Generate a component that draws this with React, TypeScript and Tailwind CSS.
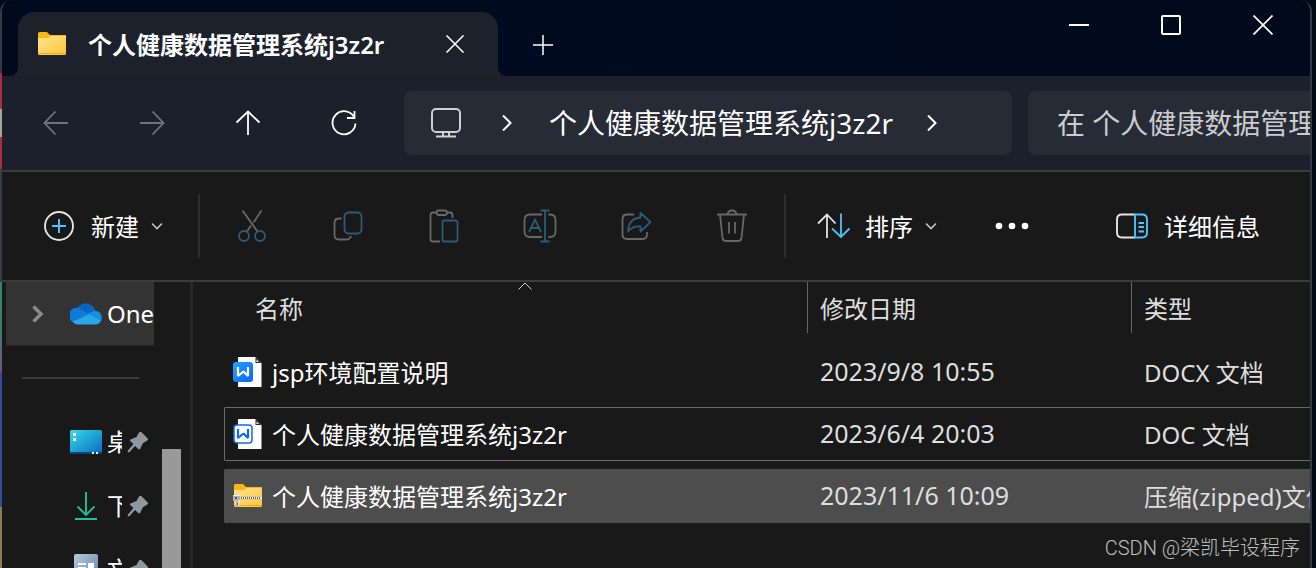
import type { ReactNode } from "react";
import clsx from "clsx";

type IconProps = { className?: string };

function FolderIcon({ zipped = false }: { zipped?: boolean }) {
  const id = zipped ? "zip-front" : "folder-front";
  return (
    <svg width="30" height="24" viewBox="0 0 30 24" className="shrink-0">
      <defs>
        <linearGradient id={id} x1="0" y1="0" x2="1" y2="1">
          <stop offset="0" stopColor="#ffe394" />
          <stop offset="1" stopColor="#ffc634" />
        </linearGradient>
      </defs>
      <path d="M1 1.500Q1 0 2.500 0H10L13 3H29V20H1Z" fill="#fbb514" />
      <path d="M1 6H11L14 4H29V21.500Q29 23 27.500 23H2.500Q1 23 1 21.500Z" fill={`url(#${id})`} />
      <path d="M1 21.500H29" stroke="#eba91c" />
      {zipped && (
        <>
          <path d="M7 12.500H29M7 15.500H29" stroke="#d9c88f" />
          <path d="M7 14H29" stroke="#f1ead2" strokeWidth="2" />
          <path d="M8 14H28" stroke="#6d6650" strokeWidth="2" strokeDasharray="1 1" />
          <path d="M0 11H7V16H6V23H3V17H0Z" fill="#b4b4b4" />
          <path d="M0 11.500H7M5.500 16V22" stroke="#ececec" />
          <path d="M2 14H4M4 20H5" stroke="#555" strokeWidth="2" />
        </>
      )}
    </svg>
  );
}

function WpsIcon({ outlined = false }: { outlined?: boolean }) {
  const id = outlined ? "wps-doc" : "wps-docx";
  return (
    <svg width="30" height="32" viewBox="0 0 30 32" className="shrink-0">
      <defs>
        <linearGradient id={id} x1="0" y1="0" x2="1" y2="1">
          <stop offset="0" stopColor="#26a5ff" />
          <stop offset="1" stopColor="#0a62fa" />
        </linearGradient>
      </defs>
      <path d="M5 1.500Q5 1 5.500 1H22.500L28.500 7V30.500Q28.500 31 28 31H5.500Q5 31 5 30.500Z" fill="#fff" />
      <path d="M22.500 1V7H28.500Z" fill="#252a38" />
      <path d="M23.500 3.500V6H26Z" fill="#fff" />
      <rect
        x={outlined ? 1 : 0}
        y={outlined ? 7 : 6}
        width={outlined ? 18 : 20}
        height={outlined ? 18 : 20}
        rx="3"
        fill={outlined ? "#fff" : `url(#${id})`}
        stroke={outlined ? "#1267f7" : "none"}
        strokeWidth="1.500"
      />
      <path
        d="M5 11V20L10.500 15.500 15 20V11"
        fill="none"
        stroke={outlined ? "#1267f7" : "#fff"}
        strokeWidth="2.200"
        strokeLinejoin="bevel"
      />
    </svg>
  );
}

function Cross({ size }: { size: number }) {
  return (
    <svg width={size} height={size} viewBox="0 0 20 20" stroke="#fff" strokeWidth="1.700">
      <path d="M.5.5 19.500 19.500M19.500.5.5 19.500" />
    </svg>
  );
}

function ArrowLeft({ className }: IconProps) {
  return (
    <svg width="26" height="26" viewBox="0 0 26 26" fill="none" stroke="currentColor" strokeWidth="1.800" className={className}>
      <path d="M25 13H1.500M12.500 1.500 1.500 13 12.500 24.500" />
    </svg>
  );
}

function RefreshIcon() {
  return (
    <svg width="26" height="26" viewBox="0 0 26 26" fill="none" stroke="currentColor" strokeWidth="1.800">
      <path d="M23.500 8A11.500 11.500 0 1 0 24.500 13.500M23.500 1V8H16" />
    </svg>
  );
}

function MonitorIcon() {
  return (
    <svg width="32" height="32" viewBox="0 0 32 32" fill="none" stroke="#cfd0d3" strokeWidth="2">
      <rect x="2" y="2" width="28" height="23" rx="4" />
      <path d="M13 25V29M19 25V29M6 29.500H26" />
    </svg>
  );
}

function CrumbChevron() {
  return (
    <svg width="10" height="16" viewBox="0 0 10 16" fill="none" stroke="#fff" strokeWidth="2">
      <path d="M1 .5 8.500 8 1 15.500" />
    </svg>
  );
}

function SmallChevron() {
  return (
    <svg width="12" height="8" viewBox="0 0 12 8" fill="none" stroke="#c4c4c4" strokeWidth="1.600">
      <path d="M1 1.500 6 6.500 11 1.500" />
    </svg>
  );
}

const GREY = "#686868";
const BLUE = "#2b5b78";

function ToolIcon({ children }: { children: ReactNode }) {
  return (
    <svg width="34" height="34" viewBox="0 0 34 34" fill="none" strokeWidth="1.800">
      {children}
    </svg>
  );
}

const TOOLS = [
  {
    label: "剪切",
    icon: (
      <ToolIcon>
        <path d="M7.500 1.500 22.500 22.500M26.500 1.500 18.500 13.500M16 16.500 12 22.500" stroke={GREY} />
        <circle cx="9" cy="27" r="5" stroke={BLUE} />
        <circle cx="25" cy="27" r="5" stroke={BLUE} />
      </ToolIcon>
    ),
  },
  {
    label: "复制",
    icon: (
      <ToolIcon>
        <path d="M10.500 9.500H8Q3.500 9.500 3.500 14V26Q3.500 30.500 8 30.500H15Q19 30.500 20 27" stroke={GREY} />
        <rect x="13.500" y="3.500" width="17" height="21" rx="4" stroke={BLUE} />
      </ToolIcon>
    ),
  },
  {
    label: "粘贴",
    icon: (
      <ToolIcon>
        <path d="M13 32.500H6Q3.500 32.500 3.500 30V6Q3.500 3.500 6 3.500H9.500M20 3.500H23Q25.500 3.500 25.500 6V9" stroke={GREY} />
        <rect x="9.500" y="1.500" width="10.500" height="4.500" rx="2.200" stroke={GREY} />
        <rect x="15.500" y="11.500" width="15" height="21" rx="2" stroke={BLUE} />
      </ToolIcon>
    ),
  },
  {
    label: "重命名",
    icon: (
      <ToolIcon>
        <path d="M19 5.500H7Q1.500 5.500 1.500 11V22.500Q1.500 28 7 28H19M25.500 5.500H27Q32.500 5.500 32.500 11V22.500Q32.500 28 27 28H25.500" stroke={GREY} />
        <path d="M22 1.500V32.500M17.500 1.500H26.500M17.500 32.500H26.500M6 23 12 10.500 18 23M8.500 19H15.500" stroke={BLUE} />
      </ToolIcon>
    ),
  },
  {
    label: "共享",
    icon: (
      <ToolIcon>
        <path d="M15 5.500H8Q3.500 5.500 3.500 10V25.500Q3.500 30 8 30H23.500Q28 30 28 25.500V23" stroke={GREY} />
        <path d="M21.500 4 31.500 13 21.500 22.500V17.500Q13 17 9 22.500Q9.500 9.500 21.500 8.500Z" stroke={BLUE} strokeLinejoin="round" />
      </ToolIcon>
    ),
  },
  {
    label: "删除",
    icon: (
      <ToolIcon>
        <path
          d="M2 5.500H32M12.500 5.500Q13 1.500 17 1.500T21.500 5.500M5 5.500 7.500 29Q8 32 11 32H23Q26 32 26.500 29L29 5.500M14 13V24.500M20 13V24.500"
          stroke={GREY}
        />
      </ToolIcon>
    ),
  },
];

function SortIcon() {
  return (
    <svg width="34" height="26" viewBox="0 0 34 26" fill="none" strokeWidth="1.800">
      <path d="M10 25V1.500M1 10.500 10 1.500 18.500 10.500" stroke="#e4e4e4" />
      <path d="M24 .5V24M15 15.500 24 24 32.500 15.500" stroke="#4cc2ff" />
    </svg>
  );
}

function DetailsIcon() {
  return (
    <svg width="32" height="26" viewBox="0 0 32 26" fill="none" strokeWidth="1.900">
      <path d="M19 1.500H6Q1 1.500 1 6.500V19.500Q1 24.500 6 24.500H19" stroke="#e4e4e4" />
      <path d="M19 1.500H26Q31 1.500 31 6.500V19.500Q31 24.500 26 24.500H19ZM22.500 10H28M22.500 14H28M22.500 18.500H28" stroke="#4cc2ff" />
    </svg>
  );
}

function PinIcon() {
  return (
    <svg width="22" height="22" viewBox="0 0 22 22" fill="#8e999f" className="shrink-0">
      <path d="M12 1.500Q13 0 14.500 1.200L20.500 7.200Q21.800 8.500 20.300 9.500L16 12L13 18Q12.400 19 11.500 18.200L7.500 14.500L1.500 21.500L.5 20.500L6.500 13L3.200 10Q2.300 9 3.500 8.500L9.500 6Z" />
      <path d="M7.500 14 1.500 20.500" stroke="#8e999f" strokeWidth="2" />
    </svg>
  );
}

function CloudIcon() {
  return (
    <svg width="32" height="22" viewBox="0 0 32 22" className="shrink-0">
      <path d="M6 8A10 10 0 0 1 25.500 8L16 14Z" fill="#0a63bd" />
      <path d="M2.500 19A7.500 7.500 0 0 1 10.500 6L22 13L6 20Z" fill="#0f7ad8" />
      <path d="M17 11 24.500 7.800A7 7 0 0 1 31 18L22 17Z" fill="#1590e0" />
      <path d="M2.500 18.500 19 11.500 31 17.500Q29.500 21.500 25 21.500H7.500Q4.500 21.500 2.500 18.500Z" fill="#28a8ea" />
    </svg>
  );
}

function DesktopIcon() {
  return (
    <svg width="32" height="24" viewBox="0 0 32 24" className="shrink-0">
      <defs>
        <linearGradient id="desktop" x1="0" y1="0" x2="1" y2="1">
          <stop offset="0" stopColor="#35dbe5" />
          <stop offset="1" stopColor="#0b68c4" />
        </linearGradient>
      </defs>
      <rect width="32" height="24" rx="1.500" fill="url(#desktop)" />
      <path d="M0 22H32V22.500Q32 24 30.500 24H1.500Q0 24 0 22.500Z" fill="#0a4573" />
      <path d="M3 3H6V6H3ZM3 8H6V11H3ZM22 22H24V24H22ZM26 22H28V24H26Z" fill="#e9fbff" />
    </svg>
  );
}

function DownloadIcon() {
  return (
    <svg width="32" height="28" viewBox="0 0 32 28" fill="none" stroke="#22c193" strokeWidth="1.900" className="shrink-0">
      <path d="M16 0V23M7.500 14.500 16 23 24.500 14.500M5 27H27" />
    </svg>
  );
}

function DocumentIcon() {
  return (
    <svg width="32" height="32" viewBox="0 0 32 32" className="shrink-0">
      <defs>
        <linearGradient id="document" x1="0" y1="0" x2="1" y2="1">
          <stop offset="0" stopColor="#b8cadc" />
          <stop offset="1" stopColor="#5c7ea6" />
        </linearGradient>
      </defs>
      <rect x="4" width="24" height="32" rx="2" fill="url(#document)" />
      <path d="M8 10H16M8 14H16M8 20H24M8 24H24" stroke="#fff" strokeWidth="2" />
      <path d="M18 9H24V15H18Z" fill="#fff" />
    </svg>
  );
}

const PINNED = [
  { label: "桌面", icon: <DesktopIcon /> },
  { label: "下载", icon: <DownloadIcon /> },
  { label: "文档", icon: <DocumentIcon /> },
];

const FILES = [
  { name: "jsp环境配置说明", date: "2023/9/8 10:55", type: "DOCX 文档", icon: <WpsIcon />, state: "" },
  { name: "个人健康数据管理系统j3z2r", date: "2023/6/4 20:03", type: "DOC 文档", icon: <WpsIcon outlined />, state: "focused" },
  { name: "个人健康数据管理系统j3z2r", date: "2023/11/6 10:09", type: "压缩(zipped)文件夹", icon: <FolderIcon zipped />, state: "selected" },
];

function TitleBar() {
  return (
    <div className="flex h-[76px] shrink-0 bg-[#000a1f]">
      <div className="w-4 bg-[#1c212c]">
        <div className="h-full rounded-br-lg bg-[#000a1c]" />
      </div>
      <div className="w-[480px] pt-3">
        <div className="flex h-16 items-center rounded-t-2xl bg-[#1c212c] pr-[34px] pl-[19px]">
          <FolderIcon />
          <span className="ml-[21px] flex-1 pt-0.5 text-2xl font-semibold whitespace-nowrap text-white">个人健康数据管理系统j3z2r</span>
          <button aria-label="关闭标签页">
            <Cross size={18} />
          </button>
        </div>
      </div>
      <div className="flex-1 bg-[#1c212c]">
        <div className="flex h-full items-start rounded-bl-lg bg-linear-to-r from-[#000a20] to-[#000a1b]">
          <button aria-label="新建标签页" className="mt-[35px] ml-[35px]">
            <svg width="20" height="20" viewBox="0 0 20 20" stroke="#fff" strokeWidth="1.500">
              <path d="M10 0V20M0 10H20" />
            </svg>
          </button>
          <div className="mr-px ml-auto flex h-[50px]">
            <button aria-label="最小化" className="flex w-23 items-center justify-center">
              <span className="h-0.5 w-5 bg-white" />
            </button>
            <button aria-label="最大化" className="flex w-23 items-center justify-center">
              <span className="size-5 rounded-xs border-2 border-white" />
            </button>
            <button aria-label="关闭" className="flex w-23 items-center justify-center">
              <Cross size={20} />
            </button>
          </div>
        </div>
      </div>
    </div>
  );
}

function NavBar() {
  return (
    <div className="flex h-24 shrink-0 items-center border-b-2 border-[#3b3b3b] bg-[#1b202c] pl-1.5 text-white">
      <button aria-label="后退" disabled className="flex w-24 justify-center text-[#70747c]">
        <ArrowLeft />
      </button>
      <button aria-label="前进" disabled className="flex w-24 justify-center text-[#70747c]">
        <ArrowLeft className="rotate-180" />
      </button>
      <button aria-label="向上" className="flex w-24 justify-center">
        <ArrowLeft className="rotate-90" />
      </button>
      <button aria-label="刷新" className="flex w-24 justify-center">
        <RefreshIcon />
      </button>
      <nav className="ml-3 flex h-16 min-w-0 flex-1 items-center rounded-lg bg-[#272b36] pl-[26px] text-[28px]">
        <MonitorIcon />
        <span className="ml-10">
          <CrumbChevron />
        </span>
        <a href="#folder" className="mr-[34px] ml-[37px] whitespace-nowrap">
          个人健康数据管理系统j3z2r
        </a>
        <CrumbChevron />
      </nav>
      <input
        type="text"
        aria-label="搜索"
        placeholder="在 个人健康数据管理系统j3z2r 中搜索"
        className="ml-4 h-16 w-[282px] rounded-l-lg bg-[#272b36] pl-[29px] text-[28px] outline-none placeholder:text-[#cbccce]"
      />
    </div>
  );
}

function Toolbar() {
  return (
    <div className="flex h-[110px] shrink-0 items-center border-b-2 border-[#3b3b3b] bg-[#191919] text-2xl text-white">
      <button className="flex w-[196px] items-center pl-[41px]">
        <svg width="32" height="32" viewBox="0 0 32 32" fill="none">
          <circle cx="16" cy="16" r="14" stroke="#e4e4e4" strokeWidth="1.900" />
          <path d="M16 9V23M9 16H23" stroke="#4cc2ff" strokeWidth="2" />
        </svg>
        <span className="mr-3 ml-4 pt-0.5">新建</span>
        <SmallChevron />
      </button>
      <div className="mr-1 h-16 w-0.5 bg-[#2d2d2d]" />
      {TOOLS.map((tool) => (
        <button key={tool.label} aria-label={tool.label} disabled className="flex w-24 justify-center">
          {tool.icon}
        </button>
      ))}
      <div className="ml-1 h-16 w-0.5 bg-[#2d2d2d]" />
      <button className="ml-[31px] flex items-center">
        <SortIcon />
        <span className="mr-3 ml-3.5 pt-0.5">排序</span>
        <SmallChevron />
      </button>
      <button aria-label="查看更多" className="ml-[58px]">
        <svg width="34" height="8" viewBox="0 0 34 8" fill="#fff">
          <circle cx="4" cy="4" r="3.300" />
          <circle cx="17" cy="4" r="3.300" />
          <circle cx="30" cy="4" r="3.300" />
        </svg>
      </button>
      <button className="mr-[50px] ml-auto flex items-center">
        <DetailsIcon />
        <span className="ml-4 pt-0.5">详细信息</span>
      </button>
    </div>
  );
}

function Sidebar() {
  return (
    <aside className="flex w-[188px] shrink-0 bg-[#191919] pl-1 text-2xl text-white">
      <div className="w-[148px] shrink-0">
        <a href="#onedrive" className="flex h-16 items-center overflow-hidden border-b border-[#282828] bg-[#333] pl-[26px]">
          <svg width="12" height="18" viewBox="0 0 12 18" fill="none" stroke="#8a8a8a" strokeWidth="3.500" className="shrink-0">
            <path d="M1.500 1.500 9 9 1.500 16.500" />
          </svg>
          <span className="ml-[26px]">
            <CloudIcon />
          </span>
          <span className="ml-[5px]">OneDrive</span>
        </a>
        <div className="flex h-16 items-center pr-[15px] pl-4">
          <div className="h-0.5 flex-1 bg-[#3b3b3b]" />
        </div>
        {PINNED.map((item) => (
          <a key={item.label} href="#pinned" className="flex h-16 items-center pl-16">
            {item.icon}
            <span className="mr-[5px] ml-[5px] w-[15px] overflow-hidden whitespace-nowrap">{item.label}</span>
            <PinIcon />
          </a>
        ))}
      </div>
      <div className="ml-2 flex w-[19px] pt-[167px]">
        <div className="flex-1 bg-[#999]" />
      </div>
    </aside>
  );
}

function FileList() {
  return (
    <main className="min-w-0 flex-1 overflow-hidden border-l-3 border-[#282828] bg-[#191919] text-2xl">
      <table className="block text-left whitespace-nowrap">
        <thead className="block pl-[31px] text-[#dedede]">
          <tr className="flex h-[51px]">
            <th className="relative flex w-[583px] shrink-0 items-center pt-0.5 pl-[31px] font-normal">
              名称
              <svg width="14" height="8" viewBox="0 0 14 8" fill="none" stroke="#d0d0d0" className="absolute top-0 left-[294px]">
                <path d="M.5 7.500 7 1 13.500 7.500" />
              </svg>
            </th>
            <th className="flex w-81 shrink-0 items-center border-l border-[#666] pt-0.5 pl-3 font-normal">修改日期</th>
            <th className="flex flex-1 items-center border-l border-[#666] pt-0.5 pl-3 font-normal">类型</th>
          </tr>
        </thead>
        <tbody className="flex flex-col gap-2 pt-3 pl-[31px]">
          {FILES.map((file) => (
            <tr
              key={file.type}
              className={clsx(
                "flex h-[54px] items-center rounded-l-xs border border-r-0",
                file.state === "focused" && "border-[#6b6b6b]",
                file.state === "selected" && "border-[#4d4d4d] bg-[#4d4d4d]",
                !file.state && "border-transparent"
              )}
            >
              <td className="flex w-[582px] shrink-0 items-center gap-[9px] pl-2 text-white">
                {file.icon}
                <span className="pt-0.5">{file.name}</span>
              </td>
              <td className="w-81 shrink-0 pl-[13px] text-[25px] text-[#dedede]">{file.date}</td>
              <td className="min-w-0 flex-1 overflow-hidden pt-0.5 pl-[13px] text-[#dedede]">{file.type}</td>
            </tr>
          ))}
        </tbody>
      </table>
    </main>
  );
}

export default function App() {
  return (
    <div className="relative h-screen overflow-hidden bg-[#020b16] pr-1 font-['Noto_Sans','Noto_Sans_CJK_SC',sans-serif]">
      <div className="flex h-full flex-col overflow-hidden rounded-t-xl border-x-2 border-[#343943]">
        <TitleBar />
        <NavBar />
        <Toolbar />
        <div className="flex min-h-0 flex-1 overflow-hidden">
          <Sidebar />
          <FileList />
        </div>
      </div>
      {/* desktop showing past the window's left edge */}
      <div className="absolute inset-y-0 left-0 flex w-0.5 flex-col pt-[73px]">
        <div className="h-9 bg-[#a8303a]" />
        <div className="h-7 bg-[#a5a5a3]" />
        <div className="h-8 bg-[#a8303a]" />
        <div className="h-[113px] bg-[#343d4b]" />
        <div className="h-[90px] bg-linear-to-b from-[#2f8c5b] via-[#3f7a70] to-[#6a5588]" />
        <div className="h-[135px] bg-[#33499a]" />
        <div className="flex-1 bg-[#8c7c52]" />
      </div>
      <div className="absolute right-4 bottom-2 font-[Roboto,'Noto_Sans_CJK_SC',sans-serif] text-xl leading-6 font-light text-[#c0c0c0]">
        CSDN @梁凯毕设程序
      </div>
    </div>
  );
}
